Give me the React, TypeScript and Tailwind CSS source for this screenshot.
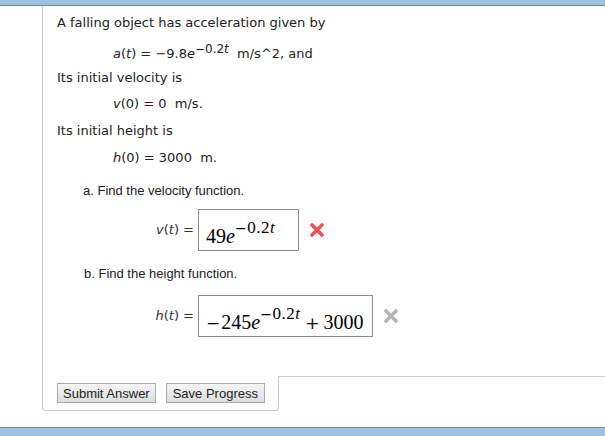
import * as React from "react";

const Cross = ({ color }: { color: string }) => (
  <svg width="14" height="14" viewBox="0 0 14 14" className="shrink-0">
    <path d="M2 2 L12 12 M12 2 L2 12" stroke={color} strokeWidth="3.6" strokeLinecap="round" />
  </svg>
);

const Sup = ({ children }: { children: React.ReactNode }) => (
  <span className="text-[17px] align-[10px] leading-none tracking-[0.5px]">
    <span className="font-['DejaVu_Serif',serif] text-[14px]">−</span>
    {children}
  </span>
);

const AnswerRow = ({
  label,
  width,
  mark,
  children,
}: {
  label: React.ReactNode;
  width: string;
  mark: string;
  children: React.ReactNode;
}) => (
  <div className="flex items-center h-[42px]">
    <div className="w-[141px] text-right pr-[4px] text-[13px] text-[#333]">{label}</div>
    <div
      className={`${width} h-[42px] border border-[#8c8c8c] flex items-center pl-[7px] font-['Liberation_Serif',serif] text-[20px] text-black leading-none pt-[5px] whitespace-nowrap`}
    >
      <span>{children}</span>
    </div>
    <div className="ml-[11px]">
      <Cross color={mark} />
    </div>
  </div>
);

export default function App() {
  return (
    <div className="w-[605px] h-[436px] bg-white flex flex-col font-['DejaVu_Sans',Verdana,sans-serif] text-[#222] overflow-hidden">
      {/* top bar */}
      <div className="h-[6px] bg-[#9ec2e0] border-b border-[#70899e]" />

      <div className="ml-[42px]">
        {/* question body */}
        <div className="h-[370px] flex flex-col border-l border-[#cccccc] pl-[14px] text-[13px] leading-4">
          <p className="mt-[9px]">A falling object has acceleration given by</p>
          <p className="mt-[12px] pl-[56px]">
            <i>a</i>(<i>t</i>) = −9.8<i>e</i>
            <span className="text-[12px] align-[5px] leading-none">
              −0.2<i>t</i>
            </span>
            {"\u00a0\u00a0"}m/s^2, and
          </p>
          <p className="mt-[8px]">Its initial velocity is</p>
          <p className="mt-[10px] pl-[56px]">
            <i>v</i>(0) = 0{"\u00a0\u00a0"}m/s.
          </p>
          <p className="mt-[11px]">Its initial height is</p>
          <p className="mt-[11px] pl-[56px]">
            <i>h</i>(0) = 3000{"\u00a0\u00a0"}m.
          </p>

          <p className="mt-[17px] pl-[26px] font-['Liberation_Sans',Arial,sans-serif] text-[13px] leading-[15px]">
            a. Find the velocity function.
          </p>
          <div className="mt-[11px]">
            <AnswerRow
              label={
                <>
                  <i>v</i>(<i>t</i>) =
                </>
              }
              width="w-[101px]"
              mark="#f34f57"
            >
              49<i>e</i>
              <Sup>
                0.2<i>t</i>
              </Sup>
            </AnswerRow>
          </div>

          <p className="mt-[15px] pl-[27px] font-['Liberation_Sans',Arial,sans-serif] text-[13px] leading-[15px]">
            b. Find the height function.
          </p>
          <div className="mt-[14px]">
            <AnswerRow
              label={
                <>
                  <i>h</i>(<i>t</i>) =
                </>
              }
              width="w-[175px]"
              mark="#b4b4b4"
            >
              <span className="font-['DejaVu_Serif',serif] text-[17px] mr-[1px]">−</span>245<i>e</i>
              <Sup>
                0.2<i>t</i>
              </Sup>
              <span className="font-['DejaVu_Serif',serif] text-[17px] ml-[5px] mr-[4px]">+</span>3000
            </AnswerRow>
          </div>
        </div>

        {/* buttons */}
        <div className="flex">
          <div className="w-[237px] h-[35px] border-l border-r border-b border-[#cccccc] rounded-b-[4px] pl-[14px] pt-[7px] flex gap-[10px] items-start">
            <button className="h-[20px] px-[5px] border border-[#ababab] bg-gradient-to-b from-[#f5f5f5] to-[#dddddd] font-['Liberation_Sans',Arial,sans-serif] text-[13px] leading-none text-[#222]">
              Submit Answer
            </button>
            <button className="h-[20px] px-[6px] border border-[#ababab] bg-gradient-to-b from-[#f5f5f5] to-[#dddddd] font-['Liberation_Sans',Arial,sans-serif] text-[13px] leading-none text-[#222]">
              Save Progress
            </button>
          </div>
          <div className="flex-1 border-t border-[#cccccc]" />
        </div>
      </div>

      <div className="mt-[16px] flex-1 bg-[#9ec2e0] border-t border-[#70899e]" />
    </div>
  );
}
